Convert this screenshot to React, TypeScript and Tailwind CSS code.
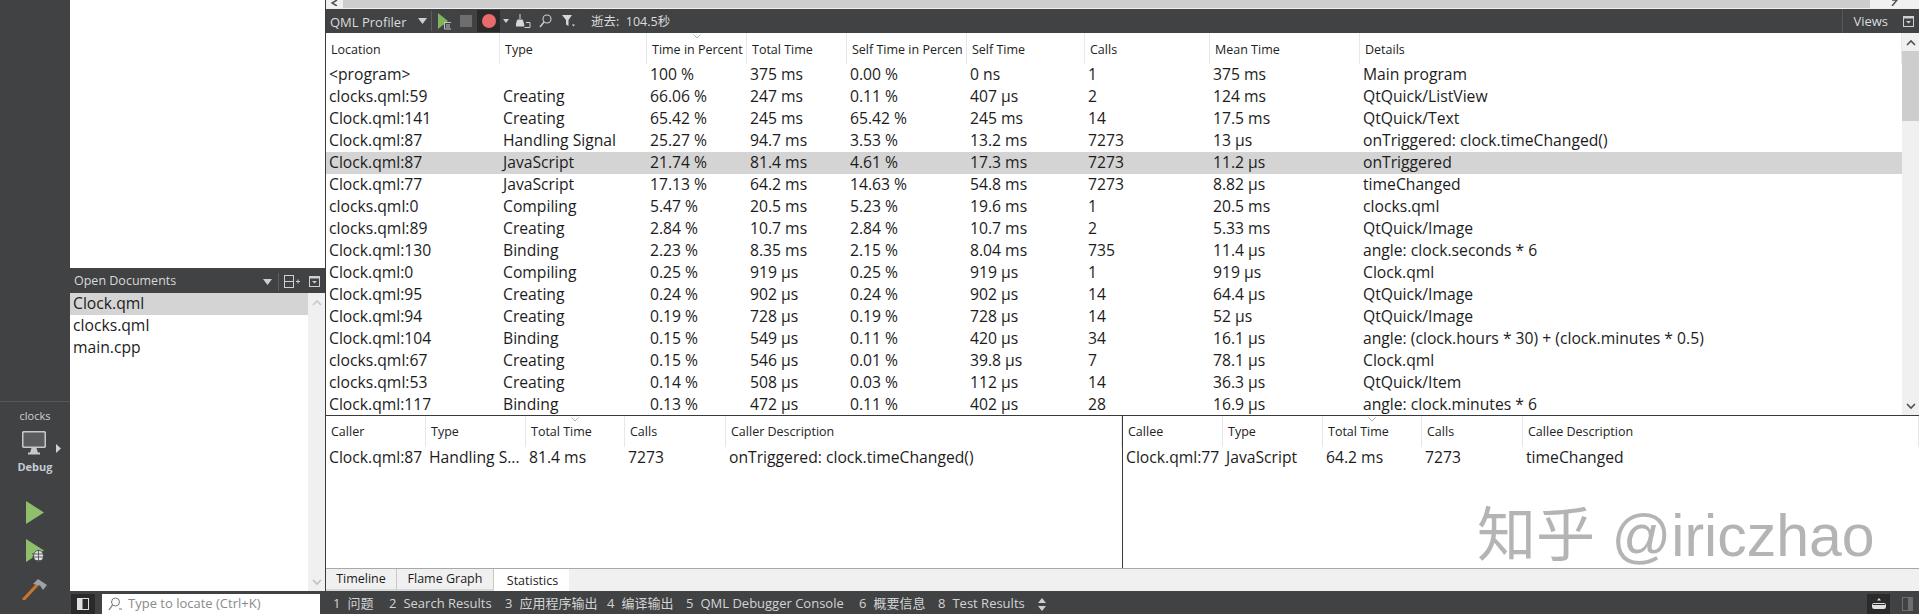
const ROWS = [
  ["<program>", "", "100 %", "375 ms", "0.00 %", "0 ns", "1", "375 ms", "Main program"],
  ["clocks.qml:59", "Creating", "66.06 %", "247 ms", "0.11 %", "407 µs", "2", "124 ms", "QtQuick/ListView"],
  ["Clock.qml:141", "Creating", "65.42 %", "245 ms", "65.42 %", "245 ms", "14", "17.5 ms", "QtQuick/Text"],
  ["Clock.qml:87", "Handling Signal", "25.27 %", "94.7 ms", "3.53 %", "13.2 ms", "7273", "13 µs", "onTriggered: clock.timeChanged()"],
  ["Clock.qml:87", "JavaScript", "21.74 %", "81.4 ms", "4.61 %", "17.3 ms", "7273", "11.2 µs", "onTriggered"],
  ["Clock.qml:77", "JavaScript", "17.13 %", "64.2 ms", "14.63 %", "54.8 ms", "7273", "8.82 µs", "timeChanged"],
  ["clocks.qml:0", "Compiling", "5.47 %", "20.5 ms", "5.23 %", "19.6 ms", "1", "20.5 ms", "clocks.qml"],
  ["clocks.qml:89", "Creating", "2.84 %", "10.7 ms", "2.84 %", "10.7 ms", "2", "5.33 ms", "QtQuick/Image"],
  ["Clock.qml:130", "Binding", "2.23 %", "8.35 ms", "2.15 %", "8.04 ms", "735", "11.4 µs", "angle: clock.seconds * 6"],
  ["Clock.qml:0", "Compiling", "0.25 %", "919 µs", "0.25 %", "919 µs", "1", "919 µs", "Clock.qml"],
  ["Clock.qml:95", "Creating", "0.24 %", "902 µs", "0.24 %", "902 µs", "14", "64.4 µs", "QtQuick/Image"],
  ["Clock.qml:94", "Creating", "0.19 %", "728 µs", "0.19 %", "728 µs", "14", "52 µs", "QtQuick/Image"],
  ["Clock.qml:104", "Binding", "0.15 %", "549 µs", "0.11 %", "420 µs", "34", "16.1 µs", "angle: (clock.hours * 30) + (clock.minutes * 0.5)"],
  ["clocks.qml:67", "Creating", "0.15 %", "546 µs", "0.01 %", "39.8 µs", "7", "78.1 µs", "Clock.qml"],
  ["clocks.qml:53", "Creating", "0.14 %", "508 µs", "0.03 %", "112 µs", "14", "36.3 µs", "QtQuick/Item"],
  ["Clock.qml:117", "Binding", "0.13 %", "472 µs", "0.11 %", "402 µs", "28", "16.9 µs", "angle: clock.minutes * 6"],
];
const HEAD = ["Location", "Type", "Time in Percent", "Total Time", "Self Time in Percen", "Self Time", "Calls", "Mean Time", "Details"];
const MAIN_GRID = "grid grid-cols-[174px_147px_100px_100px_120px_118px_125px_150px_1fr]";
const SUB_GRID = "grid grid-cols-[100px_100px_99px_101px_1fr]";

function SortMark() {
  return (
    <svg className="absolute top-[1px] left-1/2 -ml-[4px]" width="8" height="5" viewBox="0 0 8 5">
      <path d="M0.5 0.5 L4 4 L7.5 0.5" fill="none" stroke="#b5b5b5" strokeWidth="1" />
    </svg>
  );
}

function HeadCell({ label, sort, sub }: { label: string; sort?: boolean; sub?: boolean }) {
  return (
    <div className={`relative h-full border-r border-[#e8e8e8] pl-[5px] ${sub ? "pt-[8px]" : "pt-[9px]"} text-[12.5px] leading-[16px] text-[#222] overflow-hidden whitespace-nowrap`}>
      {sort && <SortMark />}
      {label}
    </div>
  );
}

function Row({ cells, selected, grid }: { cells: string[]; selected?: boolean; grid: string }) {
  return (
    <div className={`${grid} h-[22px] items-center pb-[2px] text-[15.7px] leading-[20px] text-[#1c1c1c] ${selected ? "bg-[#d4d4d4]" : ""}`}>
      {cells.map((c, i) => (
        <div key={i} className="pl-[3px] overflow-hidden whitespace-nowrap">{c}</div>
      ))}
    </div>
  );
}

function Chevron({ up, color = "#606060" }: { up?: boolean; color?: string }) {
  return (
    <svg width="10" height="7" viewBox="0 0 10 7">
      <path d={up ? "M1 6 L5 2 L9 6" : "M1 1 L5 5 L9 1"} fill="none" stroke={color} strokeWidth="1.6" />
    </svg>
  );
}

function DockIcon() {
  return (
    <svg width="11" height="11" viewBox="0 0 11 11">
      <rect x="0.5" y="0.5" width="10" height="10" fill="none" stroke="#d0d0d0" />
      <rect x="0.5" y="0.5" width="10" height="2" fill="#d0d0d0" />
      <path d="M3 5 H8 L5.5 7.5 Z" fill="#d0d0d0" />
    </svg>
  );
}

function Rail() {
  return (
    <div className="w-[70px] shrink-0 bg-[#404244] flex flex-col items-center">
      <div className="h-[402px] w-full border-b border-[#56585a] shrink-0" />
      <div className="mt-[7px] text-[11px] leading-[14px] text-[#d0d0d0]">clocks</div>
      <div className="relative mt-[8px] -ml-[2px] h-[24px] w-[24px]">
        <svg width="24" height="24" viewBox="0 0 24 24" className="block">
          <rect x="0.7" y="0.7" width="22.6" height="15.6" rx="1.5" fill="#5a5c5e" stroke="#c8c8c8" strokeWidth="1.6" />
          <path d="M9.5 17 H14.5 L16 22 H8 Z" fill="#c8c8c8" />
          <rect x="6" y="21.5" width="12" height="2" fill="#c8c8c8" />
        </svg>
        <svg className="absolute left-[34px] top-[13px]" width="5" height="9" viewBox="0 0 5 9">
          <path d="M0 0 L5 4.5 L0 9 Z" fill="#d0d0d0" />
        </svg>
      </div>
      <div className="mt-[5px] text-[11px] leading-[14px] font-bold text-[#c5cbd2]">Debug</div>
      <svg className="mt-[27px] block" width="18" height="23" viewBox="0 0 18 23">
        <path d="M0 0 L18 11.5 L0 23 Z" fill="#8fbf6a" />
      </svg>
      <svg className="mt-[15px] block" width="20" height="24" viewBox="0 0 20 24">
        <path d="M1 0 L19 11.5 L1 23 Z" fill="#8fbf6a" />
        <g fill="#e4e4e4" stroke="#404244" strokeWidth="0.8">
          <ellipse cx="13.5" cy="17" rx="5" ry="5.6" />
          <path d="M13.5 11 V23" />
          <path d="M7 15 H20 M7 18 H20 M8 21.5 H19" />
        </g>
      </svg>
      <svg className="mt-[15px] block" width="26" height="22" viewBox="0 0 26 22">
        <path d="M2 21 L15 7" stroke="#c9752c" strokeWidth="3.2" strokeLinecap="round" />
        <path d="M11 6 L16 1 L25 7 L21 12 L18 7.5 Z" fill="#a0a3a6" />
      </svg>
    </div>
  );
}

function Sidebar() {
  return (
    <div className="w-[255px] shrink-0 flex flex-col bg-white">
      <div className="h-[268px] shrink-0 bg-white" />
      <div className="h-[25px] shrink-0 bg-[#404244] flex items-center pt-[2px] text-[12.5px] text-[#d8d8d8] pl-[4px]">
        <span className="flex-1">Open Documents</span>
        <svg className="mr-[6px]" width="9" height="6" viewBox="0 0 9 6"><path d="M0 0 H9 L4.5 6 Z" fill="#d0d0d0" /></svg>
        <span className="h-[18px] w-px bg-[#5c5e60] mr-[5px]" />
        <svg className="mr-[9px]" width="16" height="13" viewBox="0 0 16 13">
          <rect x="0.5" y="0.5" width="9" height="12" fill="none" stroke="#d0d0d0" />
          <path d="M0.5 6.5 H9.5 M12 6.5 H16 M14 4.5 V8.5" stroke="#d0d0d0" fill="none" />
        </svg>
        <span className="mr-[5px] flex"><DockIcon /></span>
      </div>
      <div className="flex-1 flex min-h-0">
        <div className="flex-1 text-[15.7px] leading-[20px] text-[#1c1c1c]">
          <div className="h-[22px] bg-[#d4d4d4] pl-[3px]">Clock.qml</div>
          <div className="h-[22px] pl-[3px]">clocks.qml</div>
          <div className="h-[22px] pl-[3px]">main.cpp</div>
        </div>
        <div className="w-[17px] bg-[#f0f0f0] flex flex-col items-center justify-between pt-[6px] pb-[5px]">
          <Chevron up color="#c8c8c8" />
          <Chevron color="#c0c0c0" />
        </div>
      </div>
    </div>
  );
}

function Toolbar() {
  return (
    <div className="h-[24px] shrink-0 bg-[#404244] flex items-center text-[#dcdcdc] relative">
      <span className="ml-[4px] w-[88px] pt-[1px] text-[13px] leading-[24px]">QML Profiler</span>
      <svg width="9" height="6" viewBox="0 0 9 6"><path d="M0 0 H9 L4.5 6 Z" fill="#d0d0d0" /></svg>
      <span className="ml-[4px] h-[20px] w-px bg-[#5c5e60]" />
      <svg className="ml-[6px]" width="14" height="17" viewBox="0 0 14 17">
        <path d="M0 0 L10 8 L0 16 Z" fill="#7fb35c" />
        <path d="M6.5 9.5 H13 M6.5 9.5 V16 H13 M8 12 H12 M8 14 H12" stroke="#d0d0d0" fill="none" strokeWidth="0.9" />
      </svg>
      <span className="ml-[8px] h-[12px] w-[12px] bg-[#6e6e6e]" />
      <span className="ml-[5px] h-[22px] w-[23px] bg-[#2a2a2a] flex items-center justify-center">
        <span className="h-[14px] w-[14px] rounded-full bg-[#e96a6a]" />
      </span>
      <svg className="ml-[3px]" width="6" height="4" viewBox="0 0 6 4"><path d="M0 0 H6 L3 4 Z" fill="#d0d0d0" /></svg>
      <svg className="ml-[7px]" width="15" height="15" viewBox="0 0 15 15">
        <path d="M4 0 V5 M1.5 6 H6.5 L8 12 H0 Z" stroke="#d8d8d8" fill="#d8d8d8" strokeWidth="1" />
        <path d="M10 8.5 H14 V13.5 H8.5" stroke="#d0d0d0" fill="none" />
      </svg>
      <svg className="ml-[8px]" width="13" height="14" viewBox="0 0 13 14">
        <circle cx="8" cy="5" r="4" fill="none" stroke="#d0d0d0" strokeWidth="1.1" />
        <path d="M5 8 L1 13" stroke="#d0d0d0" strokeWidth="1.4" />
      </svg>
      <svg className="ml-[10px]" width="14" height="12" viewBox="0 0 14 12">
        <path d="M0 0 H10 L6.5 5 V11 L4 9.5 V5 Z" fill="#d8d8d8" />
        <path d="M10 9.5 H13 L11.5 11.5 Z" fill="#d8d8d8" />
      </svg>
      <span className="ml-[15px] pt-[1px] text-[12.5px] leading-[24px] whitespace-nowrap">逝去:&nbsp;&nbsp;104.5秒</span>
      <span className="flex-1" />
      <span className="h-[24px] w-px bg-[#55575a]" />
      <span className="ml-[10px] pt-[1px] text-[13px]">Views</span>
      <span className="ml-[15px] mr-[5px] flex"><DockIcon /></span>
    </div>
  );
}

function MainTable() {
  return (
    <div className="h-[383px] shrink-0 flex bg-white border-b border-[#3a3a3a]">
      <div className="w-[1576px] shrink-0">
        <div className={`${MAIN_GRID} h-[31px]`}>
          {HEAD.map((h, i) => (
            <HeadCell key={i} label={h} sort={i === 2} />
          ))}
        </div>
        {ROWS.map((r, i) => (
          <Row key={i} cells={r} selected={i === 4} grid={MAIN_GRID} />
        ))}
      </div>
      <div className="flex-1 bg-[#f0f0f0] flex flex-col items-center">
        <div className="h-[18px] flex items-center"><Chevron up color="#505050" /></div>
        <div className="h-[70px] w-full bg-[#cdcdcd]" />
        <div className="flex-1" />
        <div className="h-[18px] flex items-center"><Chevron color="#505050" /></div>
      </div>
    </div>
  );
}

function SubPanel({ head, row, right }: { head: string[]; row: string[]; right?: boolean }) {
  return (
    <div className={`${right ? "flex-1" : "w-[797px] border-r border-[#3a3a3a]"} shrink-0 flex flex-col`}>
      <div className={`${SUB_GRID} h-[31px]`}>
        {head.map((h, i) => (
          <HeadCell key={i} label={h} sort={i === 2} sub />
        ))}
      </div>
      <Row cells={row} grid={SUB_GRID} />
    </div>
  );
}

function Tabs() {
  return (
    <div className="h-[23px] shrink-0 bg-[#f0f0f0] border-t border-[#a8a8a8] flex text-[12.5px] text-[#1c1c1c]">
      <div className="w-[71px] flex justify-center pt-[1px] leading-[18px] border-r border-[#c8c8c8] border-b-2 border-b-[#d8d8d8] h-full">Timeline</div>
      <div className="w-[97px] flex justify-center pt-[1px] leading-[18px] border-r border-[#c8c8c8] border-b-2 border-b-[#d8d8d8] h-full">Flame Graph</div>
      <div className="w-[75px] flex justify-center pl-[2px] pt-[3px] leading-[18px] bg-white h-full">Statistics</div>
    </div>
  );
}

function StatusBar() {
  const items = [
    ["1", "问题", "w-[56px]"],
    ["2", "Search Results", "w-[116px]"],
    ["3", "应用程序输出", "w-[102px]"],
    ["4", "编译输出", "w-[79px]"],
    ["5", "QML Debugger Console", "w-[173px]"],
    ["6", "概要信息", "w-[79px]"],
    ["8", "Test Results", "w-[100px]"],
  ];
  return (
    <div className="h-[23px] shrink-0 bg-[#404244] flex items-center pl-[1px] pt-[3px] text-[#d4d4d4] text-[13px]">
      <div className="h-[20px] w-[24px] bg-[#2a2a2a] flex items-center justify-center">
        <svg width="12" height="12" viewBox="0 0 12 12">
          <rect x="0.5" y="0.5" width="11" height="11" fill="none" stroke="#e0e0e0" />
          <rect x="0.5" y="0.5" width="5" height="11" fill="#e0e0e0" />
        </svg>
      </div>
      <div className="ml-[7px] h-[20px] w-[218px] bg-white flex items-center pl-[6px] text-[#8a8a8a] text-[13px] whitespace-nowrap">
        <svg className="mr-[5px]" width="15" height="14" viewBox="0 0 15 14">
          <circle cx="7.5" cy="5" r="4" fill="none" stroke="#777" strokeWidth="1" />
          <path d="M4.5 8 L1 13" stroke="#777" strokeWidth="1.3" />
          <path d="M11 12 H14" stroke="#777" strokeWidth="1" />
        </svg>
        Type to locate (Ctrl+K)
      </div>
      <div className="ml-[13px] flex items-center">
        {items.map(([n, t, w]) => (
          <div key={n} className={`${w} whitespace-nowrap`}>
            <span className="mr-[7px]">{n}</span>
            {t}
          </div>
        ))}
        <svg width="8" height="13" viewBox="0 0 8 13">
          <path d="M4 0 L8 5 H0 Z M4 13 L8 8 H0 Z" fill="#cfcfcf" />
        </svg>
      </div>
      <div className="flex-1" />
      <div className="h-[20px] w-[23px] bg-[#2a2a2a] flex items-center justify-center">
        <svg width="14" height="12" viewBox="0 0 14 12">
          <path d="M7 0 L9 2.5 H5 Z" fill="#e0e0e0" />
          <rect x="0.5" y="5.5" width="13" height="5" rx="1" fill="none" stroke="#e0e0e0" />
          <rect x="1" y="7" width="12" height="3" fill="#e0e0e0" />
        </svg>
      </div>
      <div className="ml-[12px] mr-[6px]">
        <svg width="11" height="14" viewBox="0 0 11 14">
          <rect x="0.5" y="0.5" width="10" height="13" fill="none" stroke="#6c6e70" />
          <rect x="6" y="0.5" width="4.5" height="13" fill="#6c6e70" />
        </svg>
      </div>
    </div>
  );
}

export default function App() {
  return (
    <div className="relative w-[1919px] h-[614px] overflow-hidden flex bg-white font-['Open_Sans','Noto_Sans_CJK_SC',sans-serif]">
      <Rail />
      <div className="flex-1 flex flex-col min-w-0">
        <div className="flex-1 flex min-h-0">
          <Sidebar />
          <div className="flex-1 min-w-0 flex flex-col border-l border-[#3a3a3a]">
            <div className="h-[9px] shrink-0 flex bg-[#f0f0f0]">
              <div className="w-[17px] flex items-start justify-center">
                <svg width="7" height="6" viewBox="0 0 7 6"><path d="M6 0 L1 3 L6 6" fill="none" stroke="#505050" strokeWidth="1.5" /></svg>
              </div>
              <div className="w-[1527px] h-[8px] bg-[#cdcdcd]" />
              <div className="flex-1 flex items-start justify-center">
                <svg width="7" height="6" viewBox="0 0 7 6"><path d="M1 0 L6 0 L1 6" fill="none" stroke="#505050" strokeWidth="1.5" /></svg>
              </div>
            </div>
            <Toolbar />
            <MainTable />
            <div className="flex-1 flex min-h-0 bg-white">
              <SubPanel
                head={["Caller", "Type", "Total Time", "Calls", "Caller Description"]}
                row={["Clock.qml:87", "Handling S...", "81.4 ms", "7273", "onTriggered: clock.timeChanged()"]}
              />
              <SubPanel
                right
                head={["Callee", "Type", "Total Time", "Calls", "Callee Description"]}
                row={["Clock.qml:77", "JavaScript", "64.2 ms", "7273", "timeChanged"]}
              />
            </div>
            <Tabs />
          </div>
        </div>
        <StatusBar />
      </div>
      <div className="absolute left-[1477px] top-[501px] text-[#b4b4b4] text-[59px] leading-[70px] whitespace-nowrap font-['Liberation_Sans','Noto_Sans_CJK_SC',sans-serif]">
        知乎 @iriczhao
      </div>
    </div>
  );
}
